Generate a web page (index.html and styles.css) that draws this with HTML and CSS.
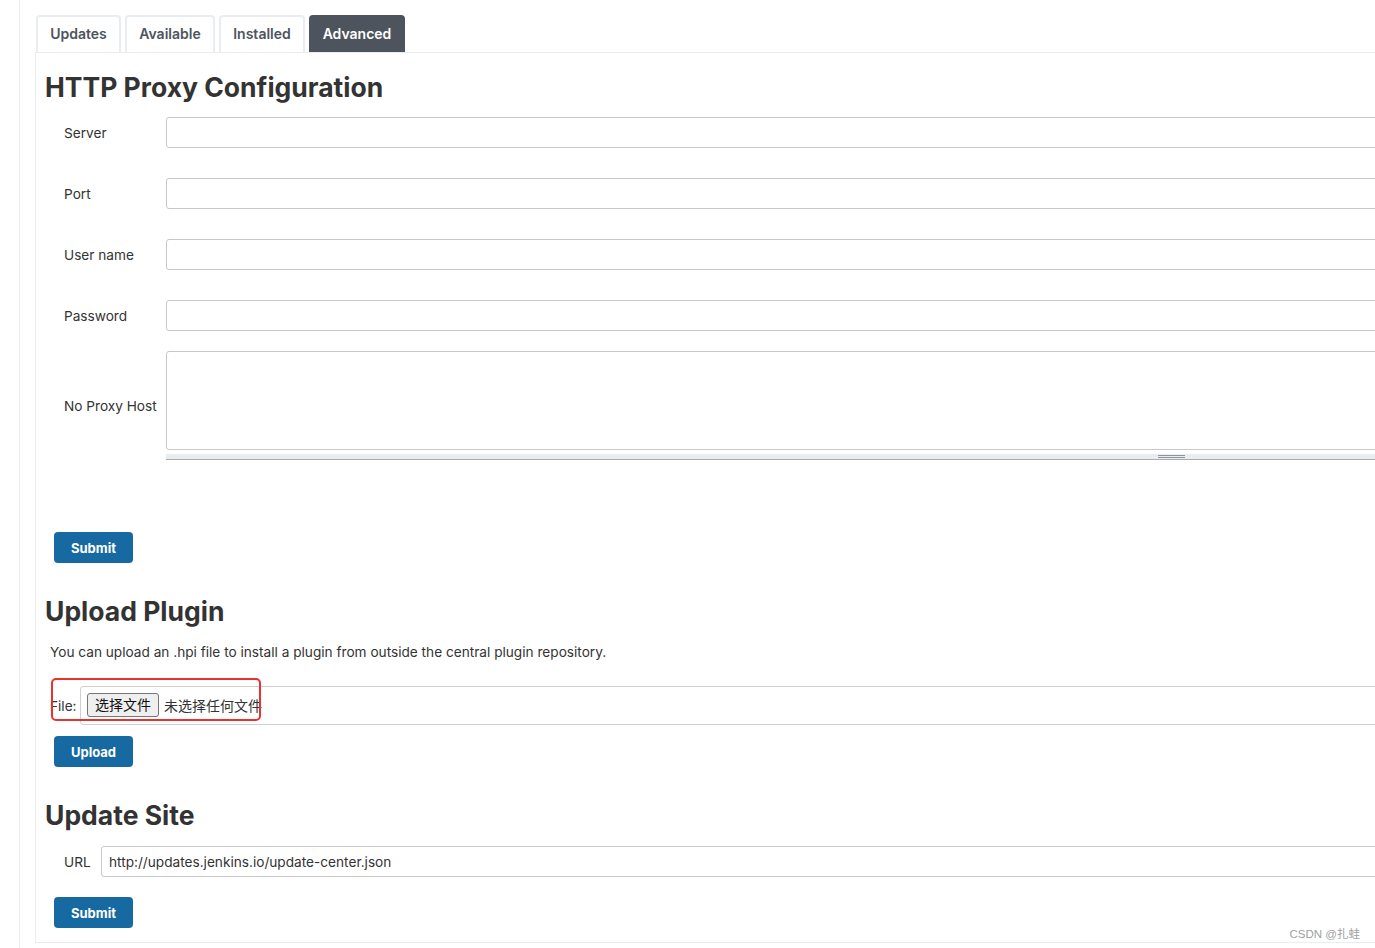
FILE: index.html
```html
<!DOCTYPE html>
<html>
<head>
<meta charset="utf-8">
<link rel="stylesheet" href="styles.css">
</head>
<body>
<div class="page">
  <div class="rail"></div>
  <div class="main">
    <div class="tabs">
      <div class="tab">Updates</div>
      <div class="tab">Available</div>
      <div class="tab">Installed</div>
      <div class="tab active">Advanced</div>
    </div>
    <div class="panel">
      <h1 class="title first">HTTP Proxy Configuration</h1>
      <div class="form">
        <div class="row"><label class="lbl">Server</label><div class="field"><div class="input"></div></div></div>
        <div class="row"><label class="lbl">Port</label><div class="field"><div class="input"></div></div></div>
        <div class="row"><label class="lbl">User name</label><div class="field"><div class="input"></div></div></div>
        <div class="row"><label class="lbl">Password</label><div class="field"><div class="input"></div></div></div>
        <div class="row area-row"><label class="lbl">No Proxy Host</label>
          <div class="field">
            <div class="textarea"></div>
            <div class="resizer"><span class="grip"></span></div>
          </div>
        </div>
      </div>
      <div class="btn-wrap submit1"><span class="btn">Submit</span></div>

      <h1 class="title">Upload Plugin</h1>
      <p class="desc">You can upload an .hpi file to install a plugin from outside the central plugin repository.</p>
      <div class="file-row">
        <span class="file-lbl">File:</span>
        <div class="file-box">
          <span class="file-btn">选择文件</span>
          <span class="file-none">未选择任何文件</span>
        </div>
        <div class="highlight"></div>
      </div>
      <div class="btn-wrap upload"><span class="btn">Upload</span></div>

      <h1 class="title">Update Site</h1>
      <div class="url-row">
        <label class="url-lbl">URL</label>
        <div class="input url-input">http://updates.jenkins.io/update-center.json</div>
      </div>
      <div class="btn-wrap submit2"><span class="btn">Submit</span></div>
    </div>
  </div>
</div>
<div class="watermark">CSDN @扎蛙</div>
</body>
</html>
```

FILE: styles.css
```css
html, body {
  margin: 0;
  padding: 0;
  overflow: hidden;
  background: #fff;
}
body {
  font-family: Inter, "Noto Sans CJK SC", sans-serif;
  color: #333;
  width: 1375px;
  height: 948px;
  position: relative;
}
.page {
  display: flex;
  height: 948px;
}
.rail {
  width: 19px;
  flex: none;
  border-right: 1px solid #ececec;
}
.main {
  margin-left: 15px;
  padding-top: 15px;
  width: 1400px;
  flex: none;
}
.tabs {
  display: flex;
  gap: 4px;
  margin-left: 1px;
}
.tab {
  height: 37px;
  box-sizing: border-box;
  padding: 0 10px 3px;
  border: 2px solid #e9edf0;
  border-bottom: none;
  border-radius: 4px 4px 0 0;
  font-size: 14px;
  font-weight: 600;
  color: #4d545d;
  display: flex;
  align-items: center;
  justify-content: center;
}
.tab:nth-child(1) { width: 85px; }
.tab:nth-child(2) { width: 90px; }
.tab:nth-child(3) { width: 86px; }
.tab.active {
  width: 96px;
  background: #4d545d;
  border-color: #4d545d;
  color: #fff;
}
.panel {
  border: 1px solid #e9edf0;
  border-right: none;
  padding: 0 0 14px 9px;
  height: 891px;
  box-sizing: border-box;
}
.title {
  font-size: 26.5px;
  line-height: 34px;
  font-weight: 700;
  margin: 31px 0 0 0;
  color: #333;
}
.title.first { margin-top: 17px; }
.form {
  margin-top: 13px;
  padding-left: 19px;
  display: flex;
  flex-direction: column;
  gap: 30px;
}
.row {
  display: flex;
  align-items: center;
}
.area-row {
  margin-top: -10px;
}
.lbl {
  width: 102px;
  flex: none;
  font-size: 13.65px;
  line-height: 20px;
  color: #333;
}
.field {
  flex: 1;
}
.input {
  height: 31px;
  box-sizing: border-box;
  border: 1px solid #c8c8c8;
  border-radius: 3px;
  background: #fff;
}
.textarea {
  height: 99px;
  box-sizing: border-box;
  border: 1px solid #c8c8c8;
  border-radius: 3px;
}
.resizer {
  margin-top: 4px;
  height: 6px;
  box-sizing: border-box;
  background: #e9edf0;
  border-bottom: 1px solid #a7acb1;
  position: relative;
}
.grip {
  position: absolute;
  left: 992px;
  top: 1px;
  width: 27px;
  height: 3px;
  border-top: 1px solid #8e9499;
  border-bottom: 1px solid #8e9499;
  box-sizing: border-box;
}
.btn-wrap {
  padding-left: 9px;
  display: flex;
}
.submit1 { margin-top: 72px; }
.upload { margin-top: 11px; }
.submit2 { margin-top: 20px; }
.btn {
  width: 79px;
  height: 31px;
  background: #176aa1;
  color: #fff;
  font-size: 13px;
  font-weight: 700;
  border-radius: 4px;
  display: flex;
  align-items: center;
  justify-content: center;
}
.desc {
  margin: 14px 0 0 5px;
  font-size: 13.65px;
  line-height: 20px;
  color: #333;
}
.file-row {
  margin-top: 24px;
  display: flex;
  align-items: center;
  position: relative;
  padding-left: 5px;
}
.file-lbl {
  font-size: 13.65px;
  width: 30px;
  flex: none;
  color: #333;
}
.file-box {
  flex: 1;
  height: 39px;
  box-sizing: border-box;
  border: 1px solid #d0d0d0;
  border-radius: 3px;
  display: flex;
  align-items: center;
  padding-left: 6px;
  padding-bottom: 2px;
  font-family: "Noto Sans CJK SC", sans-serif;
  font-size: 14px;
  line-height: 18px;
  color: #333;
}
.file-btn {
  height: 24px;
  box-sizing: border-box;
  padding: 0 7px 1px;
  border: 1px solid #767676;
  border-radius: 3px;
  background: #efefef;
  display: flex;
  align-items: center;
  color: #111;
  margin-right: 5px;
}
.file-none {
  color: #333;
}
.highlight {
  position: absolute;
  left: 6px;
  top: -8px;
  width: 210px;
  height: 43px;
  box-sizing: border-box;
  border: 2px solid #e8322f;
  border-radius: 5px;
  pointer-events: none;
}
.url-row {
  margin-top: 14px;
  padding-left: 19px;
  display: flex;
  align-items: center;
}
.url-lbl {
  width: 37px;
  flex: none;
  font-size: 13.65px;
  color: #333;
}
.url-input {
  flex: 1;
  display: flex;
  align-items: center;
  padding-left: 7px;
  font-size: 13.65px;
  color: #333;
}
.watermark {
  position: absolute;
  right: 15px;
  top: 925px;
  font-family: "Liberation Sans", "Noto Sans CJK SC", sans-serif;
  font-size: 11.5px;
  color: #a0a0a0;
}
```
